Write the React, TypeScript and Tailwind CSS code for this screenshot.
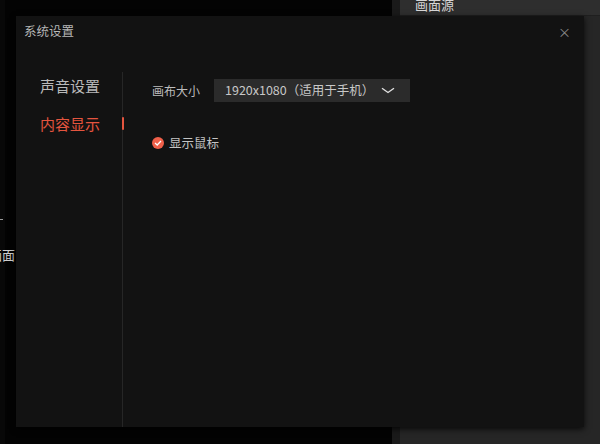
import React, { useState } from 'react';

const font = "font-['Microsoft_YaHei','Noto_Sans_CJK_SC',sans-serif]";

const tabs = ['声音设置', '内容显示'];

const App: React.FC = () => {
  const [activeTab, setActiveTab] = useState(1);
  const [showCursor, setShowCursor] = useState(true);

  return (
    <div className={`relative w-[600px] h-[444px] overflow-hidden bg-black ${font}`}>
      {/* editor behind the dialog */}
      <div className="flex h-full">
        <div className="flex-1 bg-[#030303] border-l-[5px] border-[#080808]">
          <div className="mt-[219px] -ml-[5px] w-[3px] h-[1px] bg-[#9a9a9a]" />
          <div className="mt-[27px] -ml-[16px] text-[13px] leading-[16px] text-[#cfcfcf]">画面</div>
        </div>
        <div className="w-[8px] bg-[#1a1a1a]" />
        <div className="w-[200px] flex flex-col bg-[#262626]">
          <div className="h-[16px] bg-[#2e2e2e] border-b border-[#1f1f1f] pl-[15px] text-[13px] leading-[10px] text-[#d6d6d6]">
            画面源
          </div>
        </div>
      </div>

      {/* system settings dialog */}
      <div className="absolute left-[16px] top-[16px] w-[568px] h-[411px] flex flex-col bg-[#121212] shadow-[0_2px_6px_rgba(0,0,0,0.8)]">
        <div className="h-[30px] flex items-center justify-between pl-[8px] pr-[13px]">
          <span className="text-[12.5px] text-[#b8b8b8]">系统设置</span>
          <button className="text-[13px] leading-none text-[#8a8a8a]">×</button>
        </div>

        <div className="flex flex-1 pt-[26px]">
          <div className="w-[107px] border-r border-[#262626] flex flex-col gap-[10px]">
            {tabs.map((t, i) => (
              <div
                key={t}
                onClick={() => setActiveTab(i)}
                className="relative h-[28px] flex items-center pl-[24px] cursor-pointer"
              >
                <span className={`text-[15px] ${i === activeTab ? 'text-[#e4553f]' : 'text-[#b9b9b9]'}`}>{t}</span>
                {i === activeTab && (
                  <span className="absolute right-[-2px] top-[7px] w-[2px] h-[13px] bg-[#e4553f] rounded-sm" />
                )}
              </div>
            ))}
          </div>

          <div className="flex-1 pl-[29px]">
            <div className="flex items-center gap-[14px] mt-[7px]">
              <span className="text-[12px] text-[#bdbdbd]">画布大小</span>
              <div className="w-[196px] h-[23px] bg-[#2b2b2b] flex items-center pl-[11px] gap-[7px] text-[12.5px] text-[#c8c8c8]">
                <span>1920x1080（适用于手机）</span>
                <svg width="14" height="7" viewBox="0 0 14 7">
                  <path d="M1 1.2 L7 5.5 L13 1.2" fill="none" stroke="#e0e0e0" strokeWidth="1.4" />
                </svg>
              </div>
            </div>

            <div
              className="flex items-center gap-[5px] mt-[33px] h-[16px] cursor-pointer"
              onClick={() => setShowCursor(v => !v)}
            >
              <span
                className={`w-[12px] h-[12px] rounded-full flex items-center justify-center ${
                  showCursor ? 'bg-[#f0604a]' : 'border border-[#666]'
                }`}
              >
                {showCursor && (
                  <svg width="8" height="6" viewBox="0 0 8 6">
                    <path d="M1 3 L3.2 5 L7 1" fill="none" stroke="#fff" strokeWidth="1.3" />
                  </svg>
                )}
              </span>
              <span className="text-[12.5px] text-[#c4c4c4]">显示鼠标</span>
            </div>
          </div>
        </div>
      </div>
    </div>
  );
};

export default App;
